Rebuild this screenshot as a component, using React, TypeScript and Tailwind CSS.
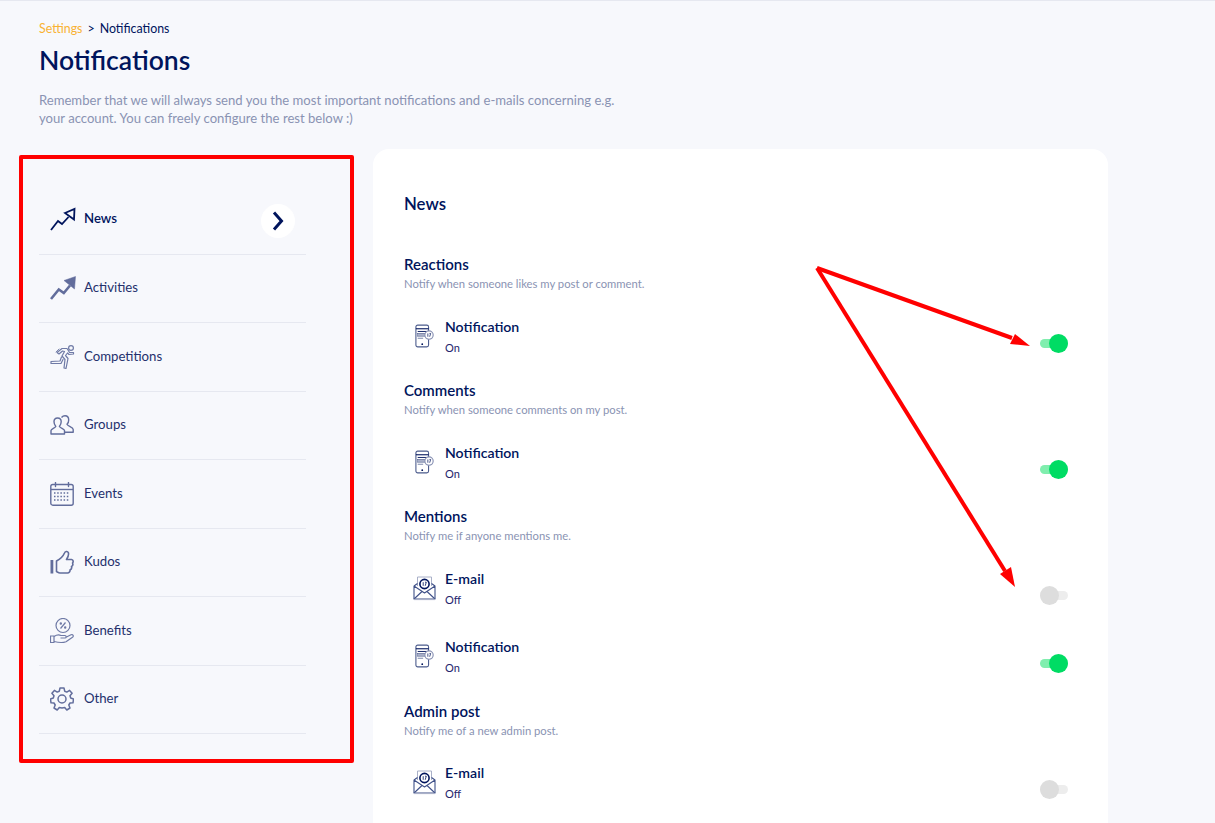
import React from "react";

const IconTrendOutline = () => (
  <svg width="26" height="24" viewBox="0 0 26 24" fill="none" stroke="#00145c" strokeWidth="1.8" strokeLinejoin="miter">
    <path d="M1 23 L8 14 L12 17 L18.5 10" />
    <path d="M15 6 L24.5 2 L24 12.5 Z" />
  </svg>
);

const IconTrendFilled = () => (
  <svg width="26" height="24" viewBox="0 0 26 24" fill="none" stroke="#626d9c" strokeWidth="2.6" strokeLinejoin="miter">
    <path d="M1 23 L8.8 13.5 L13.8 17 L20 9.5" />
    <path d="M14 4.5 L25.5 0.5 L24.5 13 Z" fill="#626d9c" strokeWidth="0.5" />
  </svg>
);

const IconRunner = () => (
  <svg width="26" height="26" viewBox="0 0 26 26" fill="none" stroke="#6f7aa6" strokeWidth="1.2" strokeLinejoin="round" strokeLinecap="round">
    <circle cx="21" cy="4" r="2.4" />
    <path d="M17 4.5 L12 4.5 L7 8.5 L9 10 L12.5 7 L14.5 7.5 L12 12 L15 15.5 L14 24 L16 24.5 L18 14.5 L15.5 11.5 L17.5 9 L19 10.5 L23.5 10 L23.5 8.5 L19.5 8.5 L18 6 Z" />
    <path d="M11.5 13 L10 17 L1 17.5 L1 19.5 L11 19.5 L13 15.5" />
    <path d="M6 8 L9 5" strokeWidth="0.9" />
  </svg>
);

const IconGroups = () => (
  <svg width="24" height="20" viewBox="0 0 24 20" fill="none" stroke="#626d9c" strokeWidth="1.4" strokeLinejoin="round">
    <path d="M1 19 L1 15.5 C1 13.8 4.8 13.2 5.8 11.5 C4.6 10 4 8.7 4 6.8 C4 4.4 5.7 3 7.6 3 C9.5 3 11.2 4.4 11.2 6.8 C11.2 8.7 10.6 10 9.4 11.5 C10.4 13.2 14.5 13.8 14.5 15.5 L14.5 19 Z" />
    <path d="M11.5 2.5 C12.5 1.4 13.6 0.8 15 0.8 C17.2 0.8 18.7 2.7 18.7 5 C18.7 6.8 18 8.3 17 9.3 C18 11.5 23.2 12 23.2 14.4 L23.2 17.3 L15 17.3" />
  </svg>
);

const IconCalendar = () => (
  <svg width="24" height="24" viewBox="0 0 24 24" fill="none" stroke="#626d9c" strokeWidth="1.4">
    <rect x="0.8" y="2.5" width="22.4" height="20.7" rx="2" />
    <path d="M1 7.5 H23" />
    <path d="M5.5 0.5 V4.5 M18.5 0.5 V4.5" strokeLinecap="round" />
    <path d="M4 11 H20 M4 14.5 H20 M4 18 H20" strokeWidth="1.5" strokeDasharray="1.5 1.7" />
  </svg>
);

const IconThumb = () => (
  <svg width="24" height="25" viewBox="0 0 24 25" fill="none" stroke="#626d9c" strokeWidth="1.6" strokeLinejoin="round">
    <rect x="0.5" y="10" width="2.8" height="13.5" fill="#626d9c" stroke="none" />
    <path d="M6.5 11 C9.5 9.5 13 6.5 14.5 3 C15 1.3 17.5 0.8 18.3 2.5 C19 4.5 17.5 8 16.5 9.5 L21.5 9.5 C23.5 9.8 23.5 12 22.5 13 C23.2 14.5 22.5 16 21.5 16.5 C22 18 21 19.5 20 20 C20.2 21.5 19.2 23 17.5 23 L10 23 C8.5 23 7.5 22 6.5 21.5 Z" />
  </svg>
);

const IconBenefits = () => (
  <svg width="24" height="26" viewBox="0 0 24 26" fill="none" stroke="#6f7aa6" strokeWidth="1.2" strokeLinejoin="round">
    <circle cx="13" cy="7.5" r="7" />
    <path d="M15.5 4.5 L10.5 10.5" />
    <circle cx="10.8" cy="5.5" r="0.6" fill="#6f7aa6" />
    <circle cx="15.2" cy="9.5" r="0.6" fill="#6f7aa6" />
    <path d="M0.5 18 H4 V24.5 H0.5 Z" />
    <path d="M4 18.5 C7 16.5 9 16.5 11 17.5 L15 17.5 C16.5 17.5 16.5 20 15 20 L10.5 20 M15.5 19.5 L21 16.8 C23 16 24 18 22.5 19.2 L16 23.7 C14 24.5 8 24.5 4 23.5" />
  </svg>
);

const IconGear = () => (
  <svg width="24" height="24" viewBox="0 0 24 24" fill="none" stroke="#626d9c" strokeWidth="1.5" strokeLinejoin="round">
    <circle cx="12" cy="12" r="4" />
    <path d="M10 1 H14 L14.7 4.2 L16.8 5.1 L19.6 3.4 L22.1 6.3 L20 8.8 L20.7 11 L23.5 12 L23 15.8 L20 16 L18.8 18 L20 21 L16.8 23 L14.7 20.6 L12 21 L9.3 20.6 L7.2 23 L4 21 L5.2 18 L4 16 L1 15.8 L0.5 12 L3.3 11 L4 8.8 L1.9 6.3 L4.4 3.4 L7.2 5.1 L9.3 4.2 Z" />
  </svg>
);

const IconPhone = () => (
  <svg width="19" height="24" viewBox="0 0 21 26" fill="none">
    <rect x="1" y="1" width="14" height="24" rx="2" stroke="#4b5b8c" strokeWidth="1.2" fill="#ffffff" />
    <path d="M1 5 H15" stroke="#00145c" strokeWidth="1.2" />
    <path d="M3 8 H13" stroke="#00145c" strokeWidth="1" />
    <rect x="3" y="10" width="10" height="3.2" fill="#aab1c9" stroke="#4b5b8c" strokeWidth="0.6" />
    <path d="M3 15.5 H9" stroke="#4b5b8c" strokeWidth="0.8" />
    <circle cx="8" cy="22" r="1" fill="#00145c" />
    <circle cx="15.5" cy="12" r="4.6" fill="#ffffff" stroke="#8a93b5" strokeWidth="1.3" />
    <path d="M14.2 10.2 V13.8 M16 10.2 H17.3 L16.2 13.8" stroke="#00145c" strokeWidth="0.8" />
  </svg>
);

const IconMail = () => (
  <svg className="ml-[-2px]" width="23" height="25" viewBox="0 0 23 25" fill="none">
    <path d="M4.5 10 V1 H18.5 V10" stroke="#a9b0c8" strokeWidth="1" fill="#ffffff" />
    <path d="M1 10 L4.5 7.5 M18.5 7.5 L22 10 L22 23 L1 23 L1 10 L11.5 17 L22 10" stroke="#3f5088" strokeWidth="1.1" strokeLinejoin="round" />
    <path d="M1 23 L9 15.5 M22 23 L14 15.5" stroke="#3f5088" strokeWidth="1.1" />
    <path d="M1 23.5 H22" stroke="#a9b0c8" strokeWidth="1.2" />
    <circle cx="11.5" cy="8" r="4.6" stroke="#00145c" strokeWidth="1.6" fill="#ffffff" />
    <path d="M10.2 6.2 V9.8 M12 6.2 H13.3 L12.2 9.8" stroke="#00145c" strokeWidth="0.8" />
  </svg>
);

const menu: [string, React.ReactNode][] = [
  ["Activities", <IconTrendFilled />],
  ["Competitions", <IconRunner />],
  ["Groups", <IconGroups />],
  ["Events", <IconCalendar />],
  ["Kudos", <IconThumb />],
  ["Benefits", <IconBenefits />],
  ["Other", <IconGear />],
];

const Toggle = ({ on }: { on: boolean }) =>
  on ? (
    <div className="relative mr-[1px] h-[9px] w-[28px] rounded-full bg-[#80eeae]">
      <div className="absolute right-0 top-[-5px] h-[19px] w-[19px] rounded-full bg-[#00dc64]" />
    </div>
  ) : (
    <div className="relative mr-[1px] h-[9px] w-[28px] rounded-full bg-[#ededed]">
      <div className="absolute left-0 top-[-5px] h-[19px] w-[19px] rounded-full bg-[#dddddd]" />
    </div>
  );

const Row = ({ kind, on, className }: { kind: "Notification" | "E-mail"; on: boolean; className: string }) => (
  <div className={`flex h-[42px] items-center pl-[11px] pr-[39px] ${className}`}>
    <div className="flex w-[30px] justify-start">{kind === "Notification" ? <IconPhone /> : <IconMail />}</div>
    <div className="flex-1">
      <div className="text-[14.1px] leading-[18px] font-semibold text-[#00145c]">{kind}</div>
      <div className="mt-[5px] text-[11px] leading-[14px] text-[#24246c]">{on ? "On" : "Off"}</div>
    </div>
    <div className="mt-[14px]">
      <Toggle on={on} />
    </div>
  </div>
);

const Section = ({ title, desc, className }: { title: string; desc: string; className: string }) => (
  <div className={className}>
    <div className="text-[15px] leading-[20px] font-semibold text-[#00145c]">{title}</div>
    <div className="mt-[3px] text-[11.25px] leading-[14px] text-[#8a93b3]">{desc}</div>
  </div>
);

export default function App() {
  return (
    <div
      className="relative h-[823px] overflow-hidden border-t border-[#e6e8f0] bg-[#f7f8fc] pl-[39px]"
      style={{ fontFamily: "Lato, 'Open Sans', sans-serif" }}
    >
      <div className="mt-[20px] flex items-center text-[12.4px] leading-[16px]">
        <span className="text-[#f9b233]">Settings</span>
        <span className="mx-[5px] text-[#00145c]">&gt;</span>
        <span className="text-[#00145c]">Notifications</span>
      </div>
      <h1 className="mt-[5px] text-[26.5px] leading-[36px] font-semibold text-[#00145c]">Notifications</h1>
      <p className="mt-[13px] w-[585px] text-[13.1px] leading-[18px] text-[#8a93b3]">
        Remember that we will always send you the most important notifications and e-mails concerning e.g. your account.
        You can freely configure the rest below :)
      </p>

      <div className="mt-[22px] flex items-start">
        <aside className="mt-[36px] w-[267px] shrink-0">
          <div className="flex h-[69.5px] items-center border-b border-[#e6e8f0] px-[11px]">
            <div className="flex w-[34px]">
              <IconTrendOutline />
            </div>
            <span className="flex-1 text-[13.2px] font-semibold text-[#00145c]">News</span>
            <div className="mt-[4px] flex h-[34px] w-[34px] items-center justify-center rounded-full bg-white">
              <svg width="14" height="20" viewBox="0 0 14 20" fill="none" stroke="#00145c" strokeWidth="3">
                <path d="M3 1.5 L10.5 10 L3 18.5" />
              </svg>
            </div>
          </div>
          {menu.map(([label, icon]) => (
            <div key={label} className="flex h-[68.5px] items-center border-b border-[#e6e8f0] pl-[11px]">
              <div className="flex w-[34px]">{icon}</div>
              <span className="text-[13.2px] text-[#24306c]">{label}</span>
            </div>
          ))}
        </aside>

        <main className="ml-[67px] h-[800px] w-[735px] rounded-[16px] bg-white pl-[31px] pt-[44px]">
          <h2 className="text-[16.8px] leading-[22px] font-semibold text-[#00145c]">News</h2>
          <Section className="mt-[39px]" title="Reactions" desc="Notify when someone likes my post or comment." />
          <Row className="mt-[24px]" kind="Notification" on />
          <Section className="mt-[23px]" title="Comments" desc="Notify when someone comments on my post." />
          <Row className="mt-[24px]" kind="Notification" on />
          <Section className="mt-[23px]" title="Mentions" desc="Notify me if anyone mentions me." />
          <Row className="mt-[24px]" kind="E-mail" on={false} />
          <Row className="mt-[26px]" kind="Notification" on />
          <Section className="mt-[23.5px]" title="Admin post" desc="Notify me of a new admin post." />
          <Row className="mt-[24px]" kind="E-mail" on={false} />
        </main>
      </div>

      {/* Red annotations lying over the screenshot */}
      <div className="pointer-events-none absolute left-[19px] top-[154px] h-[608px] w-[335px] rounded-[2px] border-[4px] border-[#ff0000]" />
      <svg className="pointer-events-none absolute left-0 top-[-1px]" width="1215" height="823" fill="none">
        <path d="M817 268 L1012 338" stroke="#ff0000" strokeWidth="4" />
        <path d="M1030 346 L1010 344 L1015 334 Z" fill="#ff0000" />
        <path d="M817 268 L1005 571" stroke="#ff0000" strokeWidth="4" />
        <path d="M1015 587 L1000 574 L1011 567 Z" fill="#ff0000" />
      </svg>
    </div>
  );
}
